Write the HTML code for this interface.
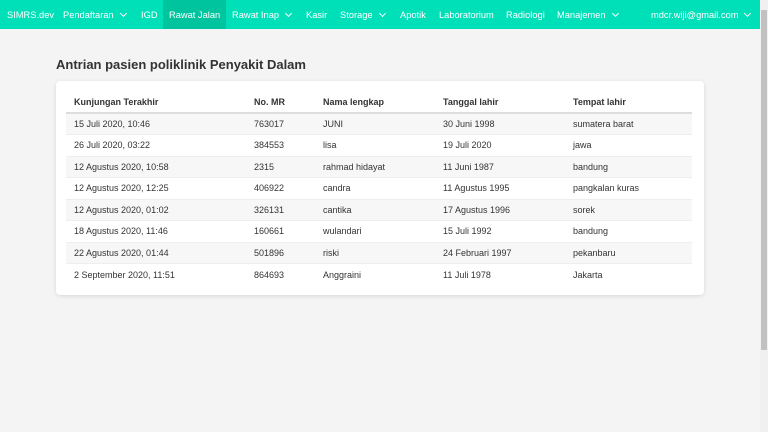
<!DOCTYPE html><html><head><style>
*{margin:0;padding:0;box-sizing:border-box}
body{width:768px;height:432px;background:#f4f4f4;font-family:"Liberation Sans",sans-serif;color:#333;position:relative;overflow:hidden}
.nav{position:absolute;left:0;top:0;width:760px;height:29px;background:#00e0b8;color:#fff;font-size:9.3px}
.nav span{position:absolute;top:0;line-height:30px;height:29px;white-space:nowrap}
.chev{display:inline-block;width:5px;height:5px;border-right:1.6px solid #fff;border-bottom:1.6px solid #fff;transform:rotate(45deg);margin-left:7px;position:relative;top:-2px}
.act{background:#00c49e;}
.sb{position:absolute;left:760px;top:0;width:8px;height:432px;background:#f0f0f0}
.sb div{position:absolute;left:1px;top:10px;width:6px;height:340px;background:#c1c1c1}
h1{position:absolute;left:56px;top:57px;font-size:13px;font-weight:bold;color:#333}
.card{position:absolute;left:56px;top:81px;width:648px;height:214px;background:#fff;border-radius:4px;box-shadow:0 1px 4px rgba(0,0,0,.12)}
table{position:absolute;left:10px;top:11px;width:626px;border-collapse:collapse;font-size:9px}
th{text-align:left;font-weight:bold;height:21px;border-bottom:2px solid #ddd;padding-left:8px}
td{height:21.5px;padding-left:8px;border-top:1px solid #eee}
tr:nth-child(even) td{background:#f7f7f7}
</style></head><body>
<div class="nav">
<span style="left:7px">SIMRS.dev</span>
<span style="left:63px">Pendaftaran<i class="chev"></i></span>
<span style="left:141px">IGD</span>
<span class="act" style="left:163px;padding:0 6px;width:63px">Rawat Jalan</span>
<span style="left:232px">Rawat Inap<i class="chev"></i></span>
<span style="left:306px">Kasir</span>
<span style="left:340px">Storage<i class="chev"></i></span>
<span style="left:400px">Apotik</span>
<span style="left:439px">Laboratorium</span>
<span style="left:506px">Radiologi</span>
<span style="left:557px">Manajemen<i class="chev"></i></span>
<span style="left:651px">mdcr.wiji@gmail.com<i class="chev"></i></span>
</div>
<div class="sb"><div></div></div>
<h1>Antrian pasien poliklinik Penyakit Dalam</h1>
<div class="card"><table>
<tr><th style="width:180px">Kunjungan Terakhir</th><th style="width:69px">No. MR</th><th style="width:120px">Nama lengkap</th><th style="width:130px">Tanggal lahir</th><th>Tempat lahir</th></tr>
<tr><td>15 Juli 2020, 10:46</td><td>763017</td><td>JUNI</td><td>30 Juni 1998</td><td>sumatera barat</td></tr>
<tr><td>26 Juli 2020, 03:22</td><td>384553</td><td>lisa</td><td>19 Juli 2020</td><td>jawa</td></tr>
<tr><td>12 Agustus 2020, 10:58</td><td>2315</td><td>rahmad hidayat</td><td>11 Juni 1987</td><td>bandung</td></tr>
<tr><td>12 Agustus 2020, 12:25</td><td>406922</td><td>candra</td><td>11 Agustus 1995</td><td>pangkalan kuras</td></tr>
<tr><td>12 Agustus 2020, 01:02</td><td>326131</td><td>cantika</td><td>17 Agustus 1996</td><td>sorek</td></tr>
<tr><td>18 Agustus 2020, 11:46</td><td>160661</td><td>wulandari</td><td>15 Juli 1992</td><td>bandung</td></tr>
<tr><td>22 Agustus 2020, 01:44</td><td>501896</td><td>riski</td><td>24 Februari 1997</td><td>pekanbaru</td></tr>
<tr><td>2 September 2020, 11:51</td><td>864693</td><td>Anggraini</td><td>11 Juli 1978</td><td>Jakarta</td></tr>
</table></div>
</body></html>
